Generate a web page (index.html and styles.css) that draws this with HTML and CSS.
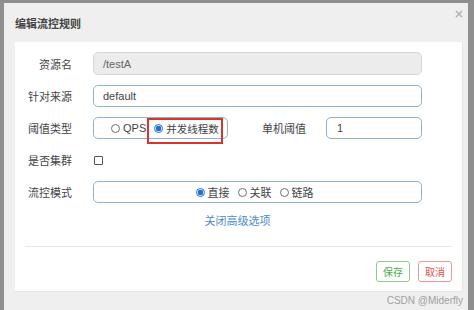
FILE: index.html
```html
<!DOCTYPE html>
<html lang="zh-CN">
  <head>
    <meta charset="UTF-8" />
    <title>编辑流控规则</title>
    <link rel="stylesheet" href="styles.css">
  </head>
  <body>
    <div class="dialog">
      <div class="dialog-header">
        <span class="dialog-title">编辑流控规则</span>
        <span class="close">
          <svg width="8" height="8" viewBox="0 0 8 8">
            <path d="M1 1L7 7M7 1L1 7" stroke="#b5b5b5" stroke-width="1.6" />
          </svg>
        </span>
      </div>

      <div class="panel">
        <form class="rule-form">
          <div class="form-row first">
            <label class="form-label">资源名</label>
            <input class="form-input disabled" type="text" value="/testA" disabled />
          </div>
          <div class="form-row">
            <label class="form-label">针对来源</label>
            <input class="form-input" type="text" value="default" />
          </div>
          <div class="form-row">
            <label class="form-label">阈值类型</label>
            <div class="radio-box small">
              <label class="radio-item">
                <input type="radio" name="grade" /> QPS
              </label>
              <label class="radio-item marked">
                <input type="radio" name="grade" checked /> 并发线程数
              </label>
            </div>
            <label class="form-label side">单机阈值</label>
            <input class="form-input short" type="text" value="1" />
          </div>
          <div class="form-row">
            <label class="form-label">是否集群</label>
            <input class="check" type="checkbox" />
          </div>
          <div class="form-row">
            <label class="form-label">流控模式</label>
            <div class="radio-box wide">
              <label class="radio-item">
                <input type="radio" name="mode" checked /> 直接
              </label>
              <label class="radio-item">
                <input type="radio" name="mode" /> 关联
              </label>
              <label class="radio-item">
                <input type="radio" name="mode" /> 链路
              </label>
            </div>
          </div>
        </form>
        <div class="toggle-link">关闭高级选项</div>

        <div class="panel-footer">
          <button class="btn btn-save">保存</button>
          <button class="btn btn-cancel">取消</button>
        </div>
      </div>

      <div class="watermark">CSDN @Miderfly</div>
    </div>
  </body>
</html>
```

FILE: styles.css
```css
body {
  margin: 0;
  background-color: #8f8f8f;
  font-family: "Liberation Sans", "Noto Sans CJK SC", sans-serif;
  color: #444;
}

.dialog {
  width: 464px;
  height: 307px;
  margin: 3px 0 0 4px;
  background-color: #efefef;
  box-sizing: border-box;
  padding: 0 5px 0 11px;
}

.dialog-header {
  height: 39px;
  display: flex;
  justify-content: space-between;
  align-items: center;
}
.dialog-title {
  font-size: 11px;
  font-weight: bold;
  color: #444;
  padding-top: 1px;
}
.close {
  align-self: flex-start;
  margin-top: 7px;
  line-height: 0;
}

.panel {
  background-color: #fff;
  height: 250px;
  box-sizing: border-box;
  padding-top: 10px;
  border: 1px solid #e6e6e6;
  border-width: 0 1px 1px 0;
}

.rule-form {
  display: flex;
  flex-direction: column;
  gap: 10px;
}
.form-row {
  display: flex;
  align-items: center;
  height: 22px;
}
.form-row.first {
  height: 23px;
}
.form-label {
  width: 57px;
  margin-right: 21px;
  text-align: right;
  font-size: 11px;
  color: #444;
  flex-shrink: 0;
}
.form-label.side {
  width: 78px;
  margin-right: 20px;
}

.form-input {
  width: 329px;
  height: 100%;
  box-sizing: border-box;
  border: 1px solid #8fb0d2;
  border-radius: 5px;
  padding: 0 9px;
  font-family: inherit;
  font-size: 11px;
  color: #444;
  background: #fff;
  outline: none;
}
.form-input.disabled {
  background-color: #ececec;
  border-color: #d6d6d6;
  color: #666;
}
.form-input.short {
  width: 96px;
  padding-left: 10px;
}

.radio-box {
  height: 100%;
  box-sizing: border-box;
  border: 1px solid #8fb0d2;
  border-radius: 5px;
  display: flex;
  align-items: center;
  gap: 8px;
  font-size: 11px;
}
.radio-box.small {
  width: 135px;
  padding-left: 17px;
}
.radio-box.wide {
  width: 329px;
  justify-content: center;
  gap: 8px;
  padding-right: 6px;
}
.radio-item {
  display: flex;
  align-items: center;
  gap: 3px;
  position: relative;
  color: #444;
}
.radio-item.marked {
  font-size: 10.5px;
}
/* red annotation frame from the screenshot */
.radio-item.marked::after {
  content: "";
  position: absolute;
  left: -7px;
  top: -3px;
  width: 76px;
  height: 26px;
  border: 2px solid #d8342d;
  box-sizing: border-box;
  z-index: 1;
}

.radio-item input {
  appearance: none;
  margin: 0;
  width: 9px;
  height: 9px;
  border: 1px solid #6f6f6f;
  border-radius: 50%;
  box-sizing: border-box;
  background: #fff;
}
.radio-item input:checked {
  border-color: #1f6fd6;
  background: radial-gradient(circle, #1f6fd6 0 2.6px, #fff 3.1px);
}

.check {
  appearance: none;
  margin: 0 0 0 1px;
  width: 9px;
  height: 9px;
  border: 1px solid #555;
  border-radius: 1px;
  background: #fff;
}

.toggle-link {
  margin-top: 11px;
  text-align: center;
  font-size: 11px;
  color: #4b8ccc;
  line-height: 14px;
  padding-right: 2px;
}

.panel-footer {
  margin: 18px 10px 0 10px;
  border-top: 1px solid #e6e6e6;
  padding-top: 14px;
  display: flex;
  justify-content: flex-end;
  gap: 8px;
}
.btn {
  width: 34px;
  height: 21px;
  padding: 0;
  background: #fff;
  border: 1px solid;
  border-radius: 3px;
  font-family: inherit;
  font-size: 10px;
  cursor: pointer;
}
.btn-save {
  color: #4cae4c;
  border-color: #8fcc8f;
}
.btn-cancel {
  color: #d9534f;
  border-color: #e79a98;
}

.watermark {
  text-align: right;
  font-size: 10px;
  color: #a0a0a0;
  padding: 3px 0 0 0;
}
```
